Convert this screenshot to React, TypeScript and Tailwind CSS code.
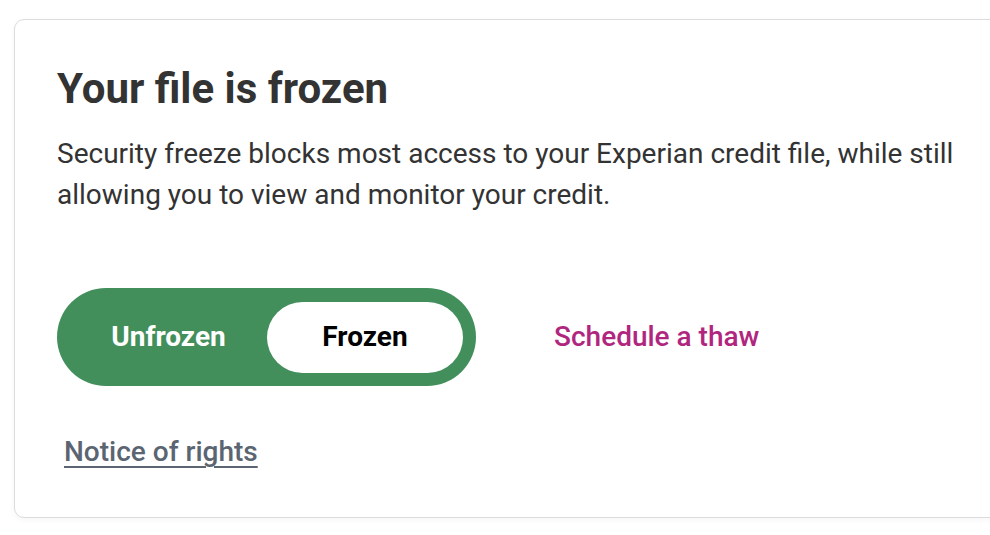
export default function App() {
  return (
    <div className="w-[990px] h-[535px] overflow-hidden bg-white" style={{ fontFamily: "Roboto, 'Noto Sans', sans-serif" }}>
      <div className="ml-[14px] mt-[19px] w-[1000px] h-[499px] rounded-[10px] border border-[#dcdcdc] bg-white shadow-[0_2px_6px_rgba(0,0,0,0.04)] pl-[42px] pt-[45px]">
        <h1 className="text-[42px] leading-[48px] font-bold text-[#333333]">Your file is frozen</h1>
        <p className="mt-[20px] w-[910px] text-[28px] leading-[41px] text-[#333333]">
          Security freeze blocks most access to your Experian credit file, while still allowing you to view and monitor your credit.
        </p>
        <div className="mt-[73px] flex items-center">
          <div className="flex h-[98px] w-[419px] items-center rounded-full bg-[#438f5c] p-[13px]">
            <div className="flex flex-1 items-center justify-center text-[28px] font-bold text-white">Unfrozen</div>
            <div className="flex h-[71px] w-[196px] items-center justify-center rounded-full bg-white text-[28px] font-bold text-black">Frozen</div>
          </div>
          <a className="ml-[78px] text-[28px] font-medium text-[#b0267f]">Schedule a thaw</a>
        </div>
        <div className="mt-[45px] pl-[7px]">
          <a className="text-[28px] font-medium text-[#5a6571] underline underline-offset-[5px] decoration-[2px]">Notice of rights</a>
        </div>
      </div>
    </div>
  );
}
